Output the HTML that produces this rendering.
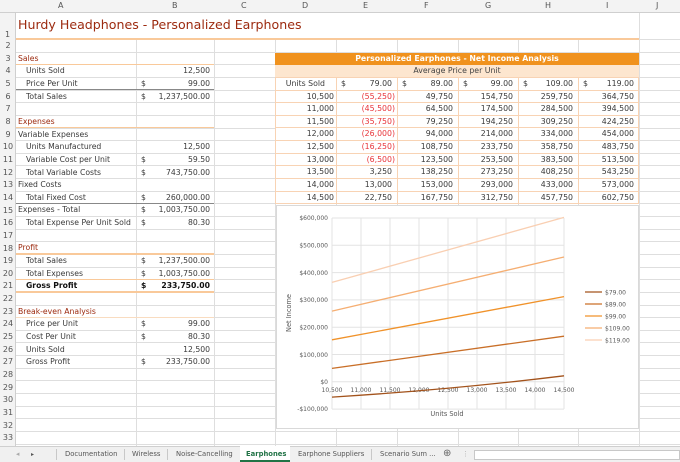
<!DOCTYPE html>
<html><head><meta charset="utf-8"><style>
*{margin:0;padding:0;box-sizing:border-box}
body{width:680px;height:462px;overflow:hidden;background:#fff;font-family:"DejaVu Sans","Liberation Sans",sans-serif;font-size:7.7px;color:#3a3a3a;position:relative}
.a{position:absolute;white-space:nowrap}
.hdr{position:absolute;left:0;top:0;width:680px;height:13px;background:#f3f3f3;border-bottom:1px solid #cfcfcf}
.hdr span{position:absolute;top:1px;font-size:8px;color:#555}
.rn{position:absolute;left:0;width:16px;background:#f3f3f3;border-right:1px solid #cfcfcf;font-size:8px;color:#555;text-align:center}
.row{position:absolute;left:16px;width:664px;height:12.65px;border-bottom:1px solid #dedede}
.vl{position:absolute;top:13px;width:1px;height:433px;background:#dedede}
.c{position:absolute;top:0;height:12px;line-height:12.6px;white-space:nowrap}
.r{text-align:right}
.sec{color:#9c2a0f}
.red{color:#e8343a}
.tb{position:absolute;left:275px;top:52.6px;width:364px;background:#fff}
.tr{position:relative;height:12.65px;border-bottom:1px solid #f8d3b4}
.tr .c{font-size:7.8px}
.vt{position:absolute;top:0;bottom:0;width:1px;background:#f8d3b4}
.tabs{position:absolute;left:0;top:446px;width:680px;height:16px;background:#f0f0f0;border-top:1px solid #cfcfcf;font-size:6.8px;color:#555}
.tabs span{position:absolute;top:3px}
.tsep{position:absolute;top:2px;width:1px;height:11px;background:#c8c8c8}
</style></head><body>

<div class="hdr">
<span style="left:58px">A</span><span style="left:172px">B</span><span style="left:241px">C</span><span style="left:302px">D</span><span style="left:363px">E</span><span style="left:424px">F</span><span style="left:485px">G</span><span style="left:545px">H</span><span style="left:606px">I</span><span style="left:656px">J</span>
</div>

<div class="vl" style="left:136px"></div><div class="vl" style="left:214px"></div><div class="vl" style="left:275px"></div><div class="vl" style="left:336px"></div><div class="vl" style="left:397px"></div><div class="vl" style="left:458px"></div><div class="vl" style="left:518px"></div><div class="vl" style="left:578px"></div><div class="vl" style="left:639px"></div>

<div class="rn" style="top:13px;height:27px;line-height:44px">1</div>
<div class="a" style="left:16px;top:13px;width:623px;height:27px;background:#fff;border-bottom:2px solid #f9c99a"></div>
<div class="a" style="left:18px;top:17px;font-size:12.6px;color:#9c2a0f;font-family:'DejaVu Sans',sans-serif">Hurdy Headphones - Personalized Earphones</div>
<div class="a" style="left:639px;top:13px;width:41px;height:27px;border-bottom:1px solid #dedede"></div>

<div class="rn" style="top:40px;height:406px"></div>
<div class="a" style="left:0;top:40px;width:16px;font-size:8px;color:#555;text-align:center;line-height:12.65px">2<br>3<br>4<br>5<br>6<br>7<br>8<br>9<br>10<br>11<br>12<br>13<br>14<br>15<br>16<br>17<br>18<br>19<br>20<br>21<br>22<br>23<br>24<br>25<br>26<br>27<br>28<br>29<br>30<br>31<br>32<br>33</div>

<div class="row" style="top:40px"></div>
<div class="row" style="top:52.6px;"><div class="c sec" style="left:2px">Sales</div><div class="a" style="left:0;top:11px;width:198px;height:1.5px;background:#f9c99a"></div></div>
<div class="row" style="top:65.3px"><div class="c" style="left:10px">Units Sold</div><div class="c r" style="left:120px;width:74px">12,500</div></div>
<div class="row" style="top:77.9px"><div class="c" style="left:10px">Price Per Unit</div><div class="c" style="left:125px">$</div><div class="c r" style="left:120px;width:74px">99.00</div><div class="a" style="left:0;top:11px;width:198px;height:1.5px;background:#888"></div></div>
<div class="row" style="top:90.6px"><div class="c" style="left:10px">Total Sales</div><div class="c" style="left:125px">$</div><div class="c r" style="left:120px;width:74px">1,237,500.00</div></div>
<div class="row" style="top:103.2px"></div>
<div class="row" style="top:115.9px"><div class="c sec" style="left:2px">Expenses</div><div class="a" style="left:0;top:11px;width:198px;height:1.5px;background:#f9c99a"></div></div>
<div class="row" style="top:128.5px"><div class="c" style="left:2px">Variable Expenses</div></div>
<div class="row" style="top:141.2px"><div class="c" style="left:10px">Units Manufactured</div><div class="c r" style="left:120px;width:74px">12,500</div></div>
<div class="row" style="top:153.8px"><div class="c" style="left:10px">Variable Cost per Unit</div><div class="c" style="left:125px">$</div><div class="c r" style="left:120px;width:74px">59.50</div></div>
<div class="row" style="top:166.5px"><div class="c" style="left:10px">Total Variable Costs</div><div class="c" style="left:125px">$</div><div class="c r" style="left:120px;width:74px">743,750.00</div></div>
<div class="row" style="top:179.1px"><div class="c" style="left:2px">Fixed Costs</div></div>
<div class="row" style="top:191.7px"><div class="c" style="left:10px">Total Fixed Cost</div><div class="c" style="left:125px">$</div><div class="c r" style="left:120px;width:74px">260,000.00</div><div class="a" style="left:0;top:11px;width:198px;height:1.5px;background:#888"></div></div>
<div class="row" style="top:204.4px"><div class="c" style="left:2px">Expenses - Total</div><div class="c" style="left:125px">$</div><div class="c r" style="left:120px;width:74px">1,003,750.00</div></div>
<div class="row" style="top:217px"><div class="c" style="left:10px">Total Expense Per Unit Sold</div><div class="c" style="left:125px">$</div><div class="c r" style="left:120px;width:74px">80.30</div></div>
<div class="row" style="top:229.7px"></div>
<div class="row" style="top:242.3px"><div class="c sec" style="left:2px">Profit</div><div class="a" style="left:0;top:11px;width:198px;height:1.5px;background:#f9c99a"></div></div>
<div class="row" style="top:255px"><div class="c" style="left:10px">Total Sales</div><div class="c" style="left:125px">$</div><div class="c r" style="left:120px;width:74px">1,237,500.00</div></div>
<div class="row" style="top:267.6px"><div class="c" style="left:10px">Total Expenses</div><div class="c" style="left:125px">$</div><div class="c r" style="left:120px;width:74px">1,003,750.00</div><div class="a" style="left:0;top:11px;width:198px;height:1.5px;background:#f9c99a"></div></div>
<div class="row" style="top:280.3px;font-weight:bold;color:#111"><div class="c" style="left:10px">Gross Profit</div><div class="c" style="left:125px">$</div><div class="c r" style="left:120px;width:74px">233,750.00</div><div class="a" style="left:0;top:11px;width:198px;height:1.5px;background:#f9c99a"></div></div>
<div class="row" style="top:292.9px"></div>
<div class="row" style="top:305.6px"><div class="c sec" style="left:2px">Break-even Analysis</div><div class="a" style="left:0;top:11px;width:198px;height:1.5px;background:#f9dcc0"></div></div>
<div class="row" style="top:318.2px"><div class="c" style="left:10px">Price per Unit</div><div class="c" style="left:125px">$</div><div class="c r" style="left:120px;width:74px">99.00</div></div>
<div class="row" style="top:330.8px"><div class="c" style="left:10px">Cost Per Unit</div><div class="c" style="left:125px">$</div><div class="c r" style="left:120px;width:74px">80.30</div></div>
<div class="row" style="top:343.5px"><div class="c" style="left:10px">Units Sold</div><div class="c r" style="left:120px;width:74px">12,500</div></div>
<div class="row" style="top:356.1px"><div class="c" style="left:10px">Gross Profit</div><div class="c" style="left:125px">$</div><div class="c r" style="left:120px;width:74px">233,750.00</div></div>
<div class="row" style="top:368.8px"></div>
<div class="row" style="top:381.4px"></div>
<div class="row" style="top:394.1px"></div>
<div class="row" style="top:406.7px"></div>
<div class="row" style="top:419.4px"></div>
<div class="row" style="top:432px"></div>

<div class="tb">
<div class="tr" style="background:#f0921e;border-bottom:none"><div class="c" style="left:0;width:364px;text-align:center;color:#fff;font-weight:bold">Personalized Earphones - Net Income Analysis</div></div>
<div class="tr" style="background:#fde6cf"><div class="c" style="left:0;width:364px;text-align:center;color:#444">Average Price per Unit</div></div>
<div class="tr"><div class="c r" style="left:0;width:50px">Units Sold</div>
<div class="c" style="left:66px">$</div><div class="c r" style="left:61px;width:56px">79.00</div>
<div class="c" style="left:127px">$</div><div class="c r" style="left:122px;width:56px">89.00</div>
<div class="c" style="left:188px">$</div><div class="c r" style="left:183px;width:55px">99.00</div>
<div class="c" style="left:248px">$</div><div class="c r" style="left:243px;width:55px">109.00</div>
<div class="c" style="left:308px">$</div><div class="c r" style="left:303px;width:56px">119.00</div></div>
<div class="tr"><div class="c r" style="left:0;width:59px">10,500</div><div class="c r red" style="left:61px;width:59px">(55,250)</div><div class="c r" style="left:122px;width:56px">49,750</div><div class="c r" style="left:183px;width:55px">154,750</div><div class="c r" style="left:243px;width:55px">259,750</div><div class="c r" style="left:303px;width:56px">364,750</div></div>
<div class="tr"><div class="c r" style="left:0;width:59px">11,000</div><div class="c r red" style="left:61px;width:59px">(45,500)</div><div class="c r" style="left:122px;width:56px">64,500</div><div class="c r" style="left:183px;width:55px">174,500</div><div class="c r" style="left:243px;width:55px">284,500</div><div class="c r" style="left:303px;width:56px">394,500</div></div>
<div class="tr"><div class="c r" style="left:0;width:59px">11,500</div><div class="c r red" style="left:61px;width:59px">(35,750)</div><div class="c r" style="left:122px;width:56px">79,250</div><div class="c r" style="left:183px;width:55px">194,250</div><div class="c r" style="left:243px;width:55px">309,250</div><div class="c r" style="left:303px;width:56px">424,250</div></div>
<div class="tr"><div class="c r" style="left:0;width:59px">12,000</div><div class="c r red" style="left:61px;width:59px">(26,000)</div><div class="c r" style="left:122px;width:56px">94,000</div><div class="c r" style="left:183px;width:55px">214,000</div><div class="c r" style="left:243px;width:55px">334,000</div><div class="c r" style="left:303px;width:56px">454,000</div></div>
<div class="tr"><div class="c r" style="left:0;width:59px">12,500</div><div class="c r red" style="left:61px;width:59px">(16,250)</div><div class="c r" style="left:122px;width:56px">108,750</div><div class="c r" style="left:183px;width:55px">233,750</div><div class="c r" style="left:243px;width:55px">358,750</div><div class="c r" style="left:303px;width:56px">483,750</div></div>
<div class="tr"><div class="c r" style="left:0;width:59px">13,000</div><div class="c r red" style="left:61px;width:59px">(6,500)</div><div class="c r" style="left:122px;width:56px">123,500</div><div class="c r" style="left:183px;width:55px">253,500</div><div class="c r" style="left:243px;width:55px">383,500</div><div class="c r" style="left:303px;width:56px">513,500</div></div>
<div class="tr"><div class="c r" style="left:0;width:59px">13,500</div><div class="c r" style="left:61px;width:56px">3,250</div><div class="c r" style="left:122px;width:56px">138,250</div><div class="c r" style="left:183px;width:55px">273,250</div><div class="c r" style="left:243px;width:55px">408,250</div><div class="c r" style="left:303px;width:56px">543,250</div></div>
<div class="tr"><div class="c r" style="left:0;width:59px">14,000</div><div class="c r" style="left:61px;width:56px">13,000</div><div class="c r" style="left:122px;width:56px">153,000</div><div class="c r" style="left:183px;width:55px">293,000</div><div class="c r" style="left:243px;width:55px">433,000</div><div class="c r" style="left:303px;width:56px">573,000</div></div>
<div class="tr"><div class="c r" style="left:0;width:59px">14,500</div><div class="c r" style="left:61px;width:56px">22,750</div><div class="c r" style="left:122px;width:56px">167,750</div><div class="c r" style="left:183px;width:55px">312,750</div><div class="c r" style="left:243px;width:55px">457,750</div><div class="c r" style="left:303px;width:56px">602,750</div></div>
<div class="vt" style="left:0;top:25px"></div><div class="vt" style="left:61px;top:25px"></div><div class="vt" style="left:122px;top:25px"></div><div class="vt" style="left:183px;top:25px"></div><div class="vt" style="left:243px;top:25px"></div><div class="vt" style="left:303px;top:25px"></div><div class="vt" style="left:363px;top:25px"></div>
</div>

<svg class="a" style="left:276px;top:205px" width="363" height="224" viewBox="276 205 363 224" font-family="DejaVu Sans, Liberation Sans, sans-serif">
<rect x="276.5" y="205.5" width="362" height="223" fill="#fff" stroke="#d9d9d9"/>
<g stroke="#e3e3e3" stroke-width="1">
<line x1="332" y1="218" x2="564" y2="218"/><line x1="332" y1="245.3" x2="564" y2="245.3"/><line x1="332" y1="272.6" x2="564" y2="272.6"/><line x1="332" y1="299.9" x2="564" y2="299.9"/><line x1="332" y1="327.2" x2="564" y2="327.2"/><line x1="332" y1="354.5" x2="564" y2="354.5"/><line x1="332" y1="381.8" x2="564" y2="381.8"/><line x1="332" y1="409.1" x2="564" y2="409.1"/>
<line x1="332" y1="218" x2="332" y2="409"/><line x1="361" y1="218" x2="361" y2="409"/><line x1="390" y1="218" x2="390" y2="409"/><line x1="419" y1="218" x2="419" y2="409"/><line x1="448" y1="218" x2="448" y2="409"/><line x1="477" y1="218" x2="477" y2="409"/><line x1="506" y1="218" x2="506" y2="409"/><line x1="535" y1="218" x2="535" y2="409"/><line x1="564" y1="218" x2="564" y2="409"/>
</g>
<g font-size="6" fill="#595959" text-anchor="end">
<text x="328" y="220">$600,000</text><text x="328" y="247.5">$500,000</text><text x="328" y="275">$400,000</text><text x="328" y="302">$300,000</text><text x="328" y="329.5">$200,000</text><text x="328" y="357">$100,000</text><text x="328" y="384">$0</text><text x="328" y="411">-$100,000</text>
</g>
<g font-size="6" fill="#595959" text-anchor="middle">
<text x="332" y="392">10,500</text><text x="361" y="392">11,000</text><text x="390" y="392">11,500</text><text x="419" y="392">12,000</text><text x="448" y="392">12,500</text><text x="477" y="392">13,000</text><text x="506" y="392">13,500</text><text x="535" y="392">14,000</text><text x="564" y="392">14,500</text>
<text x="447" y="416" font-size="6.6">Units Sold</text>
<text x="0" y="0" font-size="6.6" transform="translate(291,313) rotate(-90)">Net Income</text>
</g>
<g fill="none" stroke-width="1.3">
<path d="M332 397.1 Q448 390 564 375.8" stroke="#a3531c"/>
<line x1="332" y1="368.4" x2="564" y2="336.2" stroke="#c96f28"/>
<line x1="332" y1="339.8" x2="564" y2="296.6" stroke="#f0922a"/>
<line x1="332" y1="311.1" x2="564" y2="257" stroke="#f5ae72"/>
<line x1="332" y1="282.4" x2="564" y2="217.4" stroke="#f9cfb2"/>
</g>
<g stroke-width="1.3">
<line x1="585" y1="292" x2="602" y2="292" stroke="#a3531c"/>
<line x1="585" y1="304" x2="602" y2="304" stroke="#c96f28"/>
<line x1="585" y1="316" x2="602" y2="316" stroke="#f0922a"/>
<line x1="585" y1="328" x2="602" y2="328" stroke="#f5ae72"/>
<line x1="585" y1="340" x2="602" y2="340" stroke="#f9cfb2"/>
</g>
<g font-size="6" fill="#595959">
<text x="605" y="294.5">$79.00</text><text x="605" y="306.5">$89.00</text><text x="605" y="318.5">$99.00</text><text x="605" y="330.5">$109.00</text><text x="605" y="342.5">$119.00</text>
</g>
</svg>

<div class="tabs">
<span style="left:16px;color:#aaa">◂</span><span style="left:31px;font-size:6px;top:4px">▸</span>
<div class="tsep" style="left:56px"></div>
<span style="left:65px">Documentation</span>
<div class="tsep" style="left:124px"></div>
<span style="left:132px">Wireless</span>
<div class="tsep" style="left:167px"></div>
<span style="left:176px">Noise-Cancelling</span>
<div class="a" style="left:240px;top:-1px;width:50px;height:16px;background:#fff;border-bottom:2px solid #217346"></div>
<span style="left:246px;color:#217346;font-weight:bold">Earphones</span>
<span style="left:298px">Earphone Suppliers</span>
<div class="tsep" style="left:371px"></div>
<span style="left:380px">Scenario Sum ...</span>
<span style="left:443px;top:1px;font-size:10px;color:#666">⊕</span>
<span style="left:462px;color:#aaa">⋮</span>
<div class="a" style="left:474px;top:3px;width:206px;height:10px;background:#fff;border:1px solid #c8c8c8"></div>
</div>
</body></html>
